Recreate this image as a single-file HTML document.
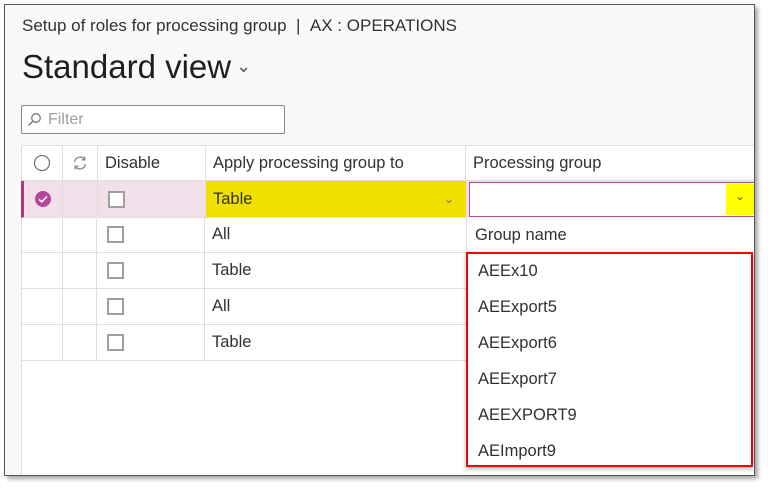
<!DOCTYPE html>
<html><head><meta charset="utf-8"><style>
*{margin:0;padding:0;box-sizing:border-box}
body{width:768px;height:489px;background:#fff;position:relative;overflow:hidden;font-family:"Liberation Sans",sans-serif;color:#323130}
.frame{position:absolute;left:4px;top:4px;width:751px;height:472px;border:1px solid #555;background:#faf9f8;box-shadow:3px 3px 4px rgba(0,0,0,.35);overflow:hidden}
.abs{position:absolute}
.t1{left:17px;top:11px;font-size:17px;color:#323130}
.t2{left:17px;top:43px;font-size:33px;color:#201f1e}
.filter{left:16px;top:100px;width:264px;height:29px;border:1px solid #8a8886;background:#fff;border-radius:2px;font-size:16px;color:#a19f9d;padding:5px 0 0 26px}
.grid{left:16px;top:140px;width:733px;height:340px;background:#fff;border-left:1px solid #ddd;border-top:1px solid #ddd}
.row{position:absolute;left:0;width:733px;border-bottom:1px solid #e1dfdd}
.c{position:absolute;top:0;height:100%;border-right:1px solid #e1dfdd;font-size:16.5px;padding-left:7px;display:flex;align-items:center}
.cb{width:17px;height:17px;border:2px solid #a19f9d;background:#fff}
.hdr{color:#323130}
.dd{position:absolute;font-size:16.5px;color:#323130}
</style></head><body>
<div class="frame">
 <div class="abs t1">Setup of roles for processing group &nbsp;| &nbsp;AX : OPERATIONS</div>
 <div class="abs t2">Standard view<span style="font-size:18px;position:relative;top:-6px;color:#555"> &#8964;</span></div>
 <div class="abs filter"><svg class="abs" style="left:5px;top:6px" width="15" height="15" viewBox="0 0 15 15"><circle cx="9" cy="6" r="4.3" fill="none" stroke="#777" stroke-width="1.3"/><path d="M6 9L1.5 13.5" stroke="#777" stroke-width="1.4"/></svg>Filter</div>
 <div class="abs grid">
  <div class="row" style="top:0;height:35px">
   <div class="c" style="left:0;width:41px;justify-content:center;padding:0"><svg width="18" height="18"><circle cx="9" cy="9" r="7.5" fill="none" stroke="#777" stroke-width="1.3"/></svg></div>
   <div class="c" style="left:41px;width:35px;justify-content:center;padding:0"><svg width="16" height="16" viewBox="0 0 16 16" fill="none" stroke="#888" stroke-width="1.3"><path d="M2.5 7A5.5 5.5 0 0 1 12.5 4.5M13.5 9A5.5 5.5 0 0 1 3.5 11.5"/><path d="M12.8 1.5v3.3H9.6M3.2 14.5v-3.3h3.2"/></svg></div>
   <div class="c hdr" style="left:76px;width:108px;padding-left:7px">Disable</div>
   <div class="c hdr" style="left:184px;width:260px">Apply processing group to</div>
   <div class="c hdr" style="left:444px;width:289px;border-right:none">Processing group</div>
  </div>
  <div class="row" style="top:35px;height:37px;background:#f2dfea;border-left:3px solid #b4367f;left:-1px;width:734px">
   <div class="c" style="left:0;width:39px;justify-content:center;padding:0"><svg width="18" height="18"><circle cx="9" cy="9" r="8" fill="#b4479a"/><path d="M5 9.3l2.7 2.5L13 6.5" stroke="#fff" stroke-width="1.5" fill="none"/></svg></div>
   <div class="c" style="left:39px;width:35px"></div>
   <div class="c" style="left:74px;width:108px;padding-left:10px"><div class="cb"></div></div>
   <div class="c" style="left:182px;width:260px;background:#f0e000;border-right:none">Table<span style="position:absolute;right:12px;color:#777;font-size:12px">&#8964;</span></div>
   <div class="c" style="left:445px;width:286px;background:#fff;border:1px solid #b4479a;height:35px;top:1px"><span style="position:absolute;right:0;top:1px;width:28px;height:31px;background:#ffff00;text-align:center;font-size:12px;color:#555;line-height:24px">&#8964;</span></div>
  </div>
 </div>
 <div class="abs" style="left:16px;top:212px;width:446px">
  <div class="row" style="top:0;height:36px;width:446px"><div class="c" style="left:0;width:42px"></div><div class="c" style="left:42px;width:34px"></div><div class="c" style="left:76px;width:108px;padding-left:10px"><div class="cb"></div></div><div class="c" style="left:184px;width:262px;border-right:none">All</div></div>
  <div class="row" style="top:36px;height:36px;width:446px"><div class="c" style="left:0;width:42px"></div><div class="c" style="left:42px;width:34px"></div><div class="c" style="left:76px;width:108px;padding-left:10px"><div class="cb"></div></div><div class="c" style="left:184px;width:262px;border-right:none">Table</div></div>
  <div class="row" style="top:72px;height:36px;width:446px"><div class="c" style="left:0;width:42px"></div><div class="c" style="left:42px;width:34px"></div><div class="c" style="left:76px;width:108px;padding-left:10px"><div class="cb"></div></div><div class="c" style="left:184px;width:262px;border-right:none">All</div></div>
  <div class="row" style="top:108px;height:36px;width:446px"><div class="c" style="left:0;width:42px"></div><div class="c" style="left:42px;width:34px"></div><div class="c" style="left:76px;width:108px;padding-left:10px"><div class="cb"></div></div><div class="c" style="left:184px;width:262px;border-right:none">Table</div></div>
 </div>
 <div class="abs" style="left:461px;top:212px;width:288px;height:36px;background:#fff;border-left:1px solid #e1dfdd;font-size:16.5px;padding:9px 0 0 8px;color:#323130">Group name</div>
 <div class="abs" style="left:461px;top:247px;width:287px;height:215px;background:#fff;border:2px solid #f00;box-shadow:0 2px 4px rgba(0,0,0,.3)">
  <div class="dd" style="left:10px;top:8px">AEEx10</div>
  <div class="dd" style="left:10px;top:44px">AEExport5</div>
  <div class="dd" style="left:10px;top:80px">AEExport6</div>
  <div class="dd" style="left:10px;top:116px">AEExport7</div>
  <div class="dd" style="left:10px;top:152px">AEEXPORT9</div>
  <div class="dd" style="left:10px;top:188px">AEImport9</div>
 </div>
</div>
</body></html>
